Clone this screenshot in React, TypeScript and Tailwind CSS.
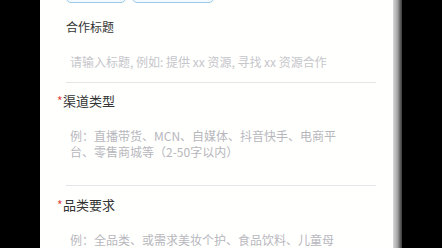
export default function App() {
  const font = { fontFamily: '"Noto Sans CJK SC", "Noto Sans", sans-serif' };
  return (
    <div className="flex h-[248px] w-[442px] overflow-hidden bg-black" style={font}>
      <div className="ml-[40px] flex h-full w-[353px] flex-col bg-[#fffffd] pl-[26px] pr-[17px]">
        {/* tabs cut off at the top */}
        <div className="-mt-[28px] flex gap-[6px]">
          <div className="h-[31px] w-[60px] rounded-[5px] border border-[#9ccbe9] bg-[#f4faff]" />
          <div className="h-[31px] w-[82px] rounded-[5px] border border-[#9ccbe9] bg-[#f4faff]" />
        </div>

        <div className="mt-[15px] text-[12px] leading-[18px] text-[#333]">合作标题</div>
        <div className="mt-[10px] flex h-[32px] items-center pl-[4px] text-[12px] whitespace-nowrap text-[#c6c6cc]">
          请输入标题, 例如: 提供 xx 资源, 寻找 xx 资源合作
        </div>
        <div className="mt-[4px] h-px bg-[#e6e6ea]" />

        <div className="mt-[9px] -ml-[9px] flex items-center text-[13px] leading-[18px] text-[#333]">
          <span className="w-[6px] text-[12px] leading-[18px] text-[#e5483f]">*</span>
          <span>渠道类型</span>
        </div>
        <div className="mt-[18px] h-[58px] pl-[4px] text-[12px] leading-[16px] text-[#b7b7be]">
          <div className="whitespace-nowrap">例：直播带货、MCN、自媒体、抖音快手、电商平</div>
          <div className="whitespace-nowrap">台、零售商城等（2-50字以内）</div>
        </div>
        <div className="h-px bg-[#e6e6ea]" />

        <div className="mt-[10px] -ml-[9px] flex items-center text-[13px] leading-[18px] text-[#333]">
          <span className="w-[6px] text-[12px] leading-[18px] text-[#e5483f]">*</span>
          <span>品类要求</span>
        </div>
        <div className="mt-[18px] pl-[4px] text-[12px] leading-[16px] whitespace-nowrap text-[#b7b7be]">
          例：全品类、或需求美妆个护、食品饮料、儿童母
        </div>
      </div>
      <div className="h-full w-[9px] bg-gradient-to-r from-[#d8d8d8] via-[#a4a4a4] to-[#3a3a3a]" />
    </div>
  );
}
